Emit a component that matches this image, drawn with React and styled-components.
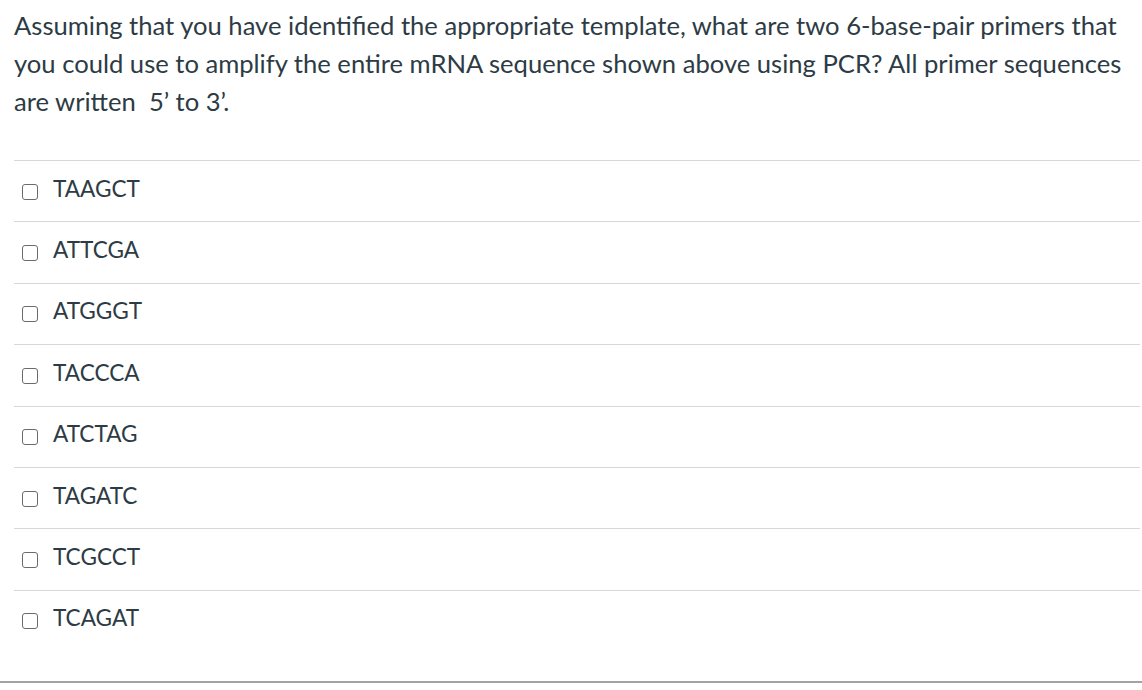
import React from "react";
import styled, { createGlobalStyle } from "styled-components";

const Global = createGlobalStyle`
  html, body { margin: 0; padding: 0; background: #fff; }
  body { font-family: Lato, "Open Sans", sans-serif; color: #2d3b45; }
`;

const Page = styled.div`
  width: 1142px;
  height: 690px;
  display: flex;
  flex-direction: column;
`;

const Question = styled.p`
  margin: 0;
  padding: 6px 0 0 14px;
  font-size: 25.6px;
  line-height: 38px;
  color: #2d3b45;
  white-space: nowrap;
`;

const Options = styled.div`
  margin: 40px 2px 0 14px;
  display: flex;
  flex-direction: column;
`;

const Option = styled.label`
  display: flex;
  align-items: center;
  height: 60.4px;
  border-top: 1px solid #d8d8d8;
  padding-left: 8px;
  box-sizing: content-box;
`;

const Box = styled.span`
  width: 14px;
  height: 14px;
  border: 1.5px solid #6b6b6b;
  border-radius: 3px;
  flex: none;
  margin-top: 1px;
`;

const Label = styled.span`
  margin-left: 15px;
  font-size: 22.6px;
  color: #2d3b45;
  margin-bottom: 6px;
`;

const Footer = styled.div`
  margin-top: 30px;
  border-top: 2px solid #a3a3a3;
`;

const items = ["TAAGCT", "ATTCGA", "ATGGGT", "TACCCA", "ATCTAG", "TAGATC", "TCGCCT", "TCAGAT"];

export default function App() {
  return (
    <Page>
      <Global />
      <Question>
        Assuming that you have identified the appropriate template, what are two 6-base-pair primers that
        <br />
        you could use to amplify the entire mRNA sequence shown above using PCR? All primer sequences
        <br />
        are written&nbsp; 5’ to 3’.
      </Question>
      <Options>
        {items.map((t) => (
          <Option key={t}>
            <Box />
            <Label>{t}</Label>
          </Option>
        ))}
      </Options>
      <Footer />
    </Page>
  );
}
